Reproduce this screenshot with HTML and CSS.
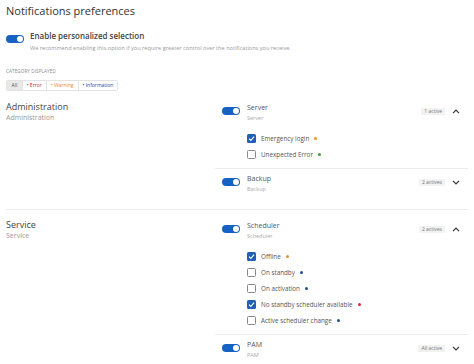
FILE: index.html
```html
<!DOCTYPE html>
<html lang="en">
<head>
<meta charset="utf-8">
<title>Notifications preferences</title>
<link rel="stylesheet" href="styles.css">
</head>
<body>
<div class="page">
  <h1 class="title">Notifications preferences</h1>

  <div class="enable">
    <span class="toggle"></span>
    <div class="enable-text">
      <div class="enable-title">Enable personalized selection</div>
      <div class="enable-sub">We recommend enabling this option if you require greater control over the notifications you receive.</div>
    </div>
  </div>

  <div class="cat-label">CATEGORY DISPLAYED</div>
  <div class="chips">
    <span class="chip chip-all">All</span>
    <span class="chip chip-error">&bull; Error</span>
    <span class="chip chip-warning">&bull; Warning</span>
    <span class="chip chip-info">&bull; Information</span>
  </div>

  <section class="group">
    <div class="group-info">
      <div class="group-name">Administration</div>
      <div class="group-sub">Administration</div>
    </div>
    <div class="items">
      <div class="item">
        <div class="item-head">
          <span class="toggle"></span>
          <div class="item-text">
            <div class="item-name">Server</div>
            <div class="item-sub">Server</div>
          </div>
          <span class="badge">1 active</span>
          <svg class="chev" viewBox="0 0 8 5" width="8" height="5"><path d="M1 4.2 L4 1.2 L7 4.2"/></svg>
        </div>
        <ul class="checks">
          <li class="check"><span class="box on"><svg viewBox="0 0 9 9" width="9" height="9"><path d="M2 4.6 L3.8 6.4 L7.1 2.7"/></svg></span><span class="label">Emergency login</span><span class="dot dot-orange"></span></li>
          <li class="check"><span class="box"></span><span class="label">Unexpected Error</span><span class="dot dot-green"></span></li>
        </ul>
      </div>
      <div class="item">
        <div class="item-head">
          <span class="toggle"></span>
          <div class="item-text">
            <div class="item-name">Backup</div>
            <div class="item-sub">Backup</div>
          </div>
          <span class="badge">2 actives</span>
          <svg class="chev" viewBox="0 0 8 5" width="8" height="5"><path d="M1 0.8 L4 3.8 L7 0.8"/></svg>
        </div>
      </div>
    </div>
  </section>

  <section class="group">
    <div class="group-info">
      <div class="group-name">Service</div>
      <div class="group-sub">Service</div>
    </div>
    <div class="items">
      <div class="item">
        <div class="item-head">
          <span class="toggle"></span>
          <div class="item-text">
            <div class="item-name">Scheduler</div>
            <div class="item-sub">Scheduler</div>
          </div>
          <span class="badge">2 actives</span>
          <svg class="chev" viewBox="0 0 8 5" width="8" height="5"><path d="M1 4.2 L4 1.2 L7 4.2"/></svg>
        </div>
        <ul class="checks">
          <li class="check"><span class="box on"><svg viewBox="0 0 9 9" width="9" height="9"><path d="M2 4.6 L3.8 6.4 L7.1 2.7"/></svg></span><span class="label">Offline</span><span class="dot dot-orange"></span></li>
          <li class="check"><span class="box"></span><span class="label">On standby</span><span class="dot dot-blue"></span></li>
          <li class="check"><span class="box"></span><span class="label">On activation</span><span class="dot dot-blue"></span></li>
          <li class="check"><span class="box on"><svg viewBox="0 0 9 9" width="9" height="9"><path d="M2 4.6 L3.8 6.4 L7.1 2.7"/></svg></span><span class="label">No standby scheduler available</span><span class="dot dot-red"></span></li>
          <li class="check"><span class="box"></span><span class="label">Active scheduler change</span><span class="dot dot-blue"></span></li>
        </ul>
      </div>
      <div class="item">
        <div class="item-head">
          <span class="toggle"></span>
          <div class="item-text">
            <div class="item-name">PAM</div>
            <div class="item-sub">PAM</div>
          </div>
          <span class="badge">All active</span>
          <svg class="chev" viewBox="0 0 8 5" width="8" height="5"><path d="M1 0.8 L4 3.8 L7 0.8"/></svg>
        </div>
      </div>
    </div>
  </section>
</div>
</body>
</html>
```

FILE: styles.css
```css
* { box-sizing: border-box; }
html, body { margin: 0; padding: 0; background: #fff; }
body {
  font-family: "Open Sans", "Noto Sans", sans-serif;
  font-size: 8px;
  color: #444;
  width: 474px;
  height: 364px;
  overflow: hidden;
}
.page { padding: 0 6px; }

.title {
  margin: 4px 0 0;
  font-size: 11px;
  line-height: 14px;
  font-weight: 400;
  color: #333;
}

.toggle {
  position: relative;
  display: block;
  flex: none;
  width: 18px;
  height: 8px;
  border-radius: 4px;
  background: #1662c4;
}
.toggle::after {
  content: "";
  position: absolute;
  right: 1px;
  top: 1px;
  width: 6px;
  height: 6px;
  border-radius: 50%;
  background: #fff;
}

.enable {
  display: flex;
  align-items: flex-start;
  gap: 6px;
  margin-top: 13px;
}
.enable .toggle { margin-top: 4px; }
.enable-title {
  font-size: 8px;
  line-height: 10px;
  font-weight: 600;
  color: #444;
}
.enable-sub {
  margin-top: 3px;
  font-size: 5.6px;
  line-height: 8px;
  color: #999;
}

.cat-label {
  margin-top: 16px;
  font-size: 4.6px;
  line-height: 6px;
  color: #888;
  letter-spacing: 0.1px;
}

.chips {
  display: flex;
  width: max-content;
  margin-top: 6px;
  height: 11px;
  border: 1px solid #e3e3e3;
  border-radius: 1.5px;
}
.chip {
  display: flex;
  align-items: center;
  padding: 0 4px;
  font-size: 5px;
  line-height: 9px;
  border-left: 1px solid #e3e3e3;
}
.chip-all { border-left: 0; background: #e9e9e9; color: #555; padding: 0 4.5px; }
.chip-error { color: #dd2b2b; }
.chip-warning { color: #f08a1c; }
.chip-info { color: #23479b; }

.group {
  display: grid;
  grid-template-columns: 209px 1fr;
  padding-top: 5px;
  border-bottom: 1px solid #ececec;
}
.group + .group { border-bottom: 0; }
.group:first-of-type { margin-top: 1px; }

.group-info { padding-top: 4px; }
.group-name {
  font-size: 9px;
  line-height: 12px;
  font-weight: 500;
  color: #444;
}
.group-sub {
  font-size: 7px;
  line-height: 9px;
  color: #999;
}

.item {
  padding: 5px 0 0 7px;
}
.item + .item {
  border-top: 1px solid #ececec;
  padding-top: 4px;
}
.items .item:last-child { padding-bottom: 16px; }

.item-head {
  display: flex;
  align-items: flex-start;
  padding-right: 8px;
}
.item-head .toggle { margin-top: 5px; }
.item-text { flex: 1; margin-left: 7px; }
.item-name {
  padding-top: 1px;
  font-size: 7px;
  line-height: 10px;
  color: #555;
}
.item-sub {
  margin-top: 1px;
  font-size: 5.5px;
  line-height: 8px;
  color: #aaa;
}
.badge {
  margin-top: 5.5px;
  padding: 0 3px;
  height: 7px;
  line-height: 7px;
  font-size: 5px;
  color: #777;
  background: #f2f2f2;
  border-radius: 1px;
}
.chev {
  margin: 6.5px 0 0 7px;
  fill: none;
  stroke: #333;
  stroke-width: 1.2;
}

.checks {
  list-style: none;
  margin: 8px 0 0;
  padding: 0 0 6px 25px;
}
.check {
  display: flex;
  align-items: center;
  height: 16px;
}
.box {
  display: block;
  flex: none;
  width: 9px;
  height: 9px;
  border: 1px solid #8a8a8a;
  border-radius: 1.5px;
  background: #fff;
}
.box.on {
  border: 0;
  background: #1f5fb5;
}
.box svg {
  display: block;
  fill: none;
  stroke: #fff;
  stroke-width: 1.1;
}
.label {
  margin-left: 5px;
  font-size: 6.3px;
  color: #555;
}
.dot {
  width: 3px;
  height: 3px;
  border-radius: 50%;
  margin-left: 5px;
}
.dot-orange { background: #f29120; }
.dot-green { background: #3aa13a; }
.dot-blue { background: #1d4f9c; }
.dot-red { background: #e3262c; }
```
